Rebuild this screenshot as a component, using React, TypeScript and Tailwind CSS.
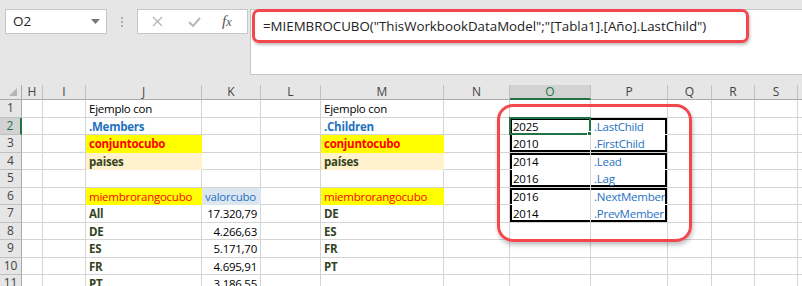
import React from "react";

type CellStyle = { text?: string; cls?: string; bg?: string; align?: "left" | "right" };

const COLS = ["H", "I", "J", "K", "L", "M", "N", "O", "P", "Q", "R", "S", ""];

const BLUE = "text-[#1f72c0]";
const GREEN = "text-[#33441f] font-bold";

const CELLS: Record<string, CellStyle> = {
  J1: { text: "Ejemplo con", cls: "text-black" },
  M1: { text: "Ejemplo con", cls: "text-black" },
  J2: { text: ".Members", cls: `${BLUE} font-bold` },
  M2: { text: ".Children", cls: `${BLUE} font-bold` },
  J3: { text: "conjuntocubo", cls: "text-[#ff0000] font-bold", bg: "yellow" },
  M3: { text: "conjuntocubo", cls: "text-[#ff0000] font-bold", bg: "yellow" },
  J4: { text: "paises", cls: GREEN, bg: "cream" },
  M4: { text: "países", cls: GREEN, bg: "cream" },
  J6: { text: "miembrorangocubo", cls: "text-[#ff0000]", bg: "yellow" },
  K6: { text: "valorcubo", cls: BLUE, bg: "blue" },
  M6: { text: "miembrorangocubo", cls: "text-[#ff0000]", bg: "yellow" },
  J7: { text: "All", cls: GREEN },
  K7: { text: "17.320,79", cls: "text-black", align: "right" },
  J8: { text: "DE", cls: GREEN },
  K8: { text: "4.266,63", cls: "text-black", align: "right" },
  J9: { text: "ES", cls: GREEN },
  K9: { text: "5.171,70", cls: "text-black", align: "right" },
  J10: { text: "FR", cls: GREEN },
  K10: { text: "4.695,91", cls: "text-black", align: "right" },
  J11: { text: "PT", cls: GREEN },
  K11: { text: "3.186,55", cls: "text-black", align: "right" },
  M7: { text: "DE", cls: GREEN },
  M8: { text: "ES", cls: GREEN },
  M9: { text: "FR", cls: GREEN },
  M10: { text: "PT", cls: GREEN },
  O2: { text: "2025", cls: "text-black" },
  P2: { text: ".LastChild", cls: BLUE },
  O3: { text: "2010", cls: "text-black" },
  P3: { text: ".FirstChild", cls: BLUE },
  O4: { text: "2014", cls: "text-black" },
  P4: { text: ".Lead", cls: BLUE },
  O5: { text: "2016", cls: "text-black" },
  P5: { text: ".Lag", cls: BLUE },
  O6: { text: "2016", cls: "text-black" },
  P6: { text: ".NextMember", cls: BLUE },
  O7: { text: "2014", cls: "text-black" },
  P7: { text: ".PrevMember", cls: BLUE },
};

// black medium borders round the O2:P7 groups, as inset shadows
function tableEdge(col: string, row: number) {
  if (row < 2 || row > 7 || (col !== "O" && col !== "P")) return "";
  const top = row % 2 === 0;
  if (col === "O" && top) return "shadow-[inset_2px_2px_0_#000] bg-white";
  if (col === "P" && top) return "shadow-[inset_-2px_2px_0_#000] bg-white";
  if (col === "O") return "shadow-[inset_2px_-2px_0_#000] bg-white";
  return "shadow-[inset_-2px_-2px_0_#000] bg-white";
}

function Cell({ col, row }: { col: string; row: number }) {
  const c = CELLS[`${col}${row}`];
  let fill = "bg-white border-[#d4d4d4]";
  if (c?.bg === "yellow") fill = "bg-[#ffff00] border-[#ffff00]";
  if (c?.bg === "cream") fill = "bg-[#fff2cc] border-[#fff2cc]";
  if (c?.bg === "blue") fill = "bg-[#dce6f1] border-[#dce6f1]";
  const inTable = col === "O" || col === "P";
  const hideRow = inTable && row >= 2 && row <= 7 && row % 2 === 0 ? "border-b-white" : "";
  return (
    <div
      className={`relative h-[17.5px] border-r border-b ${fill} ${hideRow} ${tableEdge(col, row)} flex items-end pb-[2px] px-[3px] overflow-visible whitespace-nowrap ${
        c?.align === "right" ? "justify-end" : ""
      }`}
    >
      {c && <span className={`${c.cls} leading-none tracking-[-0.25px]`}>{c.text}</span>}
      {col === "O" && row === 2 && (
        <>
          <div className="absolute -left-[1px] -top-[1px] -right-[1px] -bottom-[1px] border-2 border-[#217346]" />
          <div className="absolute -right-[3px] -bottom-[3px] w-[6px] h-[6px] bg-[#217346] border border-white" />
        </>
      )}
    </div>
  );
}

export default function App() {
  const rows = Array.from({ length: 11 }, (_, i) => i + 1);
  return (
    <div className="w-[802px] h-[286px] overflow-hidden bg-[#e6e6e6] font-['Open_Sans',sans-serif] select-none">
      {/* formula bar */}
      <div className="h-[85px] flex items-start pt-[9px]">
        <div className="ml-[5px] w-[102px] h-[25px] bg-white border border-[#c6c6c6] flex items-center justify-between pl-[7px] pr-[6px]">
          <span className="text-[13.5px] text-[#222]">O2</span>
          <svg width="9" height="5" viewBox="0 0 9 5">
            <path d="M0 0h9L4.5 5z" fill="#777" />
          </svg>
        </div>
        <div className="w-[30px] h-[25px] flex flex-col items-center justify-center gap-[2px]">
          <span className="w-[2px] h-[2px] bg-[#b0b0b0]" />
          <span className="w-[2px] h-[2px] bg-[#b0b0b0]" />
          <span className="w-[2px] h-[2px] bg-[#b0b0b0]" />
        </div>
        <div className="w-[111px] h-[25px] bg-white border border-[#c6c6c6] flex items-center">
          <svg className="ml-[14px]" width="11" height="11" viewBox="0 0 11 11">
            <path d="M1 1l9 9M10 1l-9 9" stroke="#b8b8b8" strokeWidth="1.4" />
          </svg>
          <svg className="ml-[25px]" width="13" height="10" viewBox="0 0 13 10">
            <path d="M1 5l4 4 7-8" stroke="#b8b8b8" strokeWidth="2" fill="none" />
          </svg>
          <span className="ml-[21px] font-['Liberation_Serif',serif] italic text-[15px] text-[#555] leading-none">
            f<span className="text-[12px]">x</span>
          </span>
        </div>
        <div className="ml-[2px] flex-1 h-[66px] bg-white border border-r-0 border-[#c6c6c6]">
          <div className="-mt-[1px] ml-[1px] w-[497px] h-[34px] rounded-[7px] border-[3px] border-[#f2474d] shadow-[1px_2px_3px_rgba(0,0,0,0.25)] flex items-center pl-[8px] pt-[1px]">
            <span className="text-[13.3px] text-[#222] whitespace-nowrap">
              =MIEMBROCUBO("ThisWorkbookDataModel";"[Tabla1].[Año].LastChild")
            </span>
          </div>
        </div>
      </div>

      {/* sheet */}
      <div className="relative grid grid-cols-[22px_21px_43px_116px_59px_60px_123px_66px_81px_77px_44px_43px_43px_1fr] text-[11.5px]">
        {/* column headers */}
        <div className="h-[15px] bg-[#e6e6e6] border-r border-b border-[#ababab] relative">
          <svg className="absolute right-[4px] bottom-[3px]" width="8" height="8" viewBox="0 0 8 8">
            <path d="M8 0v8H0z" fill="#b5b5b5" />
          </svg>
        </div>
        {COLS.map((c) => (
          <div
            key={c || "end"}
            className={`h-[15px] flex items-center justify-center leading-none text-[12px] border-r border-[#c0c0c0] ${
              c === "O"
                ? "bg-[#d2d2d2] text-[#217346] border-b-2 border-b-[#217346]"
                : "bg-[#e6e6e6] text-[#444] border-b border-b-[#ababab]"
            } ${c === "" ? "border-r-0" : ""}`}
          >
            {c}
          </div>
        ))}

        {rows.map((r) => (
          <React.Fragment key={r}>
            <div
              className={`h-[17.5px] flex items-center justify-center leading-none text-[12px] border-b border-[#c0c0c0] ${
                r === 2
                  ? "bg-[#d2d2d2] text-[#217346] border-r-2 border-r-[#217346]"
                  : "bg-[#e6e6e6] text-[#444] border-r border-r-[#ababab]"
              }`}
            >
              {r}
            </div>
            {COLS.map((c) =>
              c === "" ? (
                <div key="end" className="h-[17.5px] bg-white border-b border-[#d4d4d4]" />
              ) : (
                <Cell key={c} col={c} row={r} />
              )
            )}
          </React.Fragment>
        ))}

        {/* highlight annotation round O2:P7 */}
        <div className="absolute left-[497px] top-[19px] w-[195px] h-[138px] rounded-[16px] border-[3px] border-[#f2474d] shadow-[1px_3px_4px_rgba(0,0,0,0.25)] pointer-events-none" />
      </div>
    </div>
  );
}
